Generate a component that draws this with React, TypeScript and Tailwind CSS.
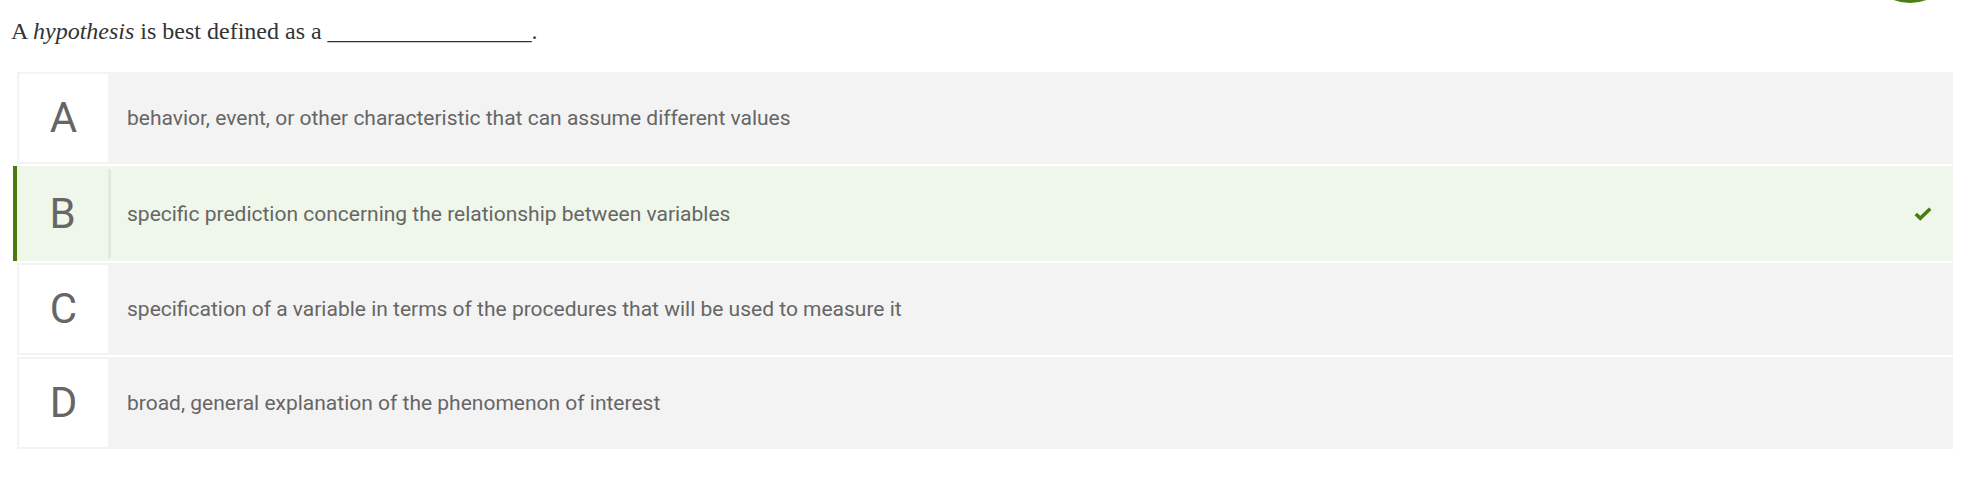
import React from "react";

const choices = [
  { letter: "A", text: "behavior, event, or other characteristic that can assume different values", correct: false },
  { letter: "B", text: "specific prediction concerning the relationship between variables", correct: true },
  { letter: "C", text: "specification of a variable in terms of the procedures that will be used to measure it", correct: false },
  { letter: "D", text: "broad, general explanation of the phenomenon of interest", correct: false },
];

function Check() {
  return (
    <svg width="18" height="14" viewBox="0 0 18 14" fill="none">
      <path d="M1.8 7 L6.3 11.3 L16.2 1.8" stroke="#4b7a10" strokeWidth="3.6" strokeLinecap="butt" strokeLinejoin="miter" />
    </svg>
  );
}

export default function App() {
  return (
    <div className="relative w-[1986px] h-[485px] overflow-hidden bg-white">
      <div className="absolute left-[1863px] top-[-91px] w-[94px] h-[94px] rounded-full bg-[#4b7d12]" />
      <p className="ml-[11px] pt-[17px] text-[24px] leading-[28px] text-[#333] font-['Liberation_Serif',serif]">
        A <i>hypothesis</i> is best defined as a _________________.
      </p>
      <div className="mt-[27px] flex flex-col gap-[2px] font-['Roboto',sans-serif] text-[#666]">
        {choices.map((c) =>
          c.correct ? (
            <div
              key={c.letter}
              className="ml-[13px] w-[1940px] h-[95px] flex items-center bg-[#eff6ea] border-l-4 border-[#4b7a10]"
            >
              <div className="w-[94px] h-[89px] flex items-center justify-center border-r-[3px] border-[#e2eadd] text-[42px] leading-none">
                {c.letter}
              </div>
              <div className="ml-[16px] pt-[2px] flex-1 text-[21px]">{c.text}</div>
              <div className="mr-[21px] flex items-center">
                <Check />
              </div>
            </div>
          ) : (
            <div
              key={c.letter}
              className="ml-[17px] w-[1936px] h-[92px] flex items-center bg-[#f3f3f3]"
            >
              <div className="ml-[2px] w-[89px] h-[88px] flex items-center justify-center bg-white text-[42px] leading-none">
                {c.letter}
              </div>
              <div className="ml-[19px] pt-[2px] flex-1 text-[21px]">{c.text}</div>
            </div>
          )
        )}
      </div>
    </div>
  );
}
